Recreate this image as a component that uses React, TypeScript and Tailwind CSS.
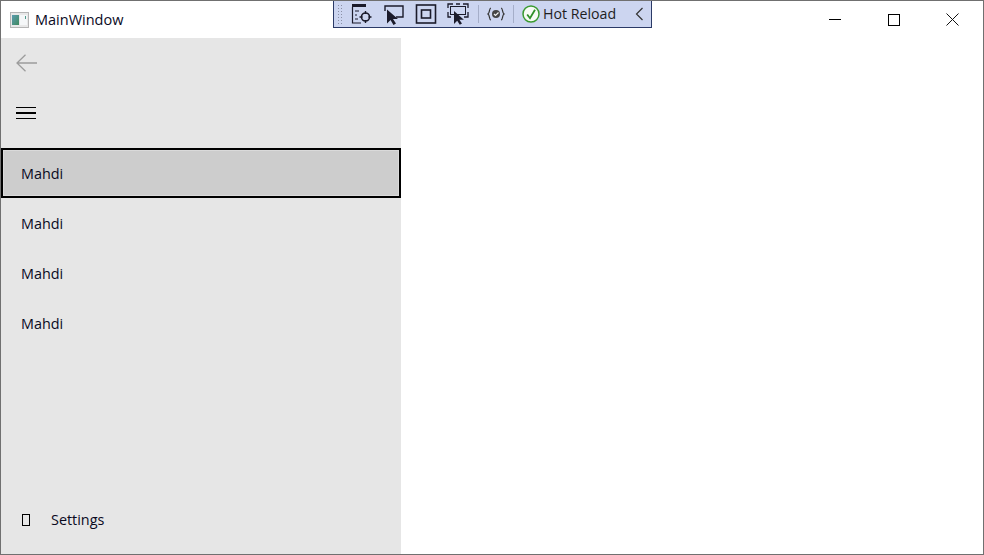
import React from "react";

const items = ["Mahdi", "Mahdi", "Mahdi", "Mahdi"];

function AppIcon() {
  return (
    <svg width="20" height="16" viewBox="0 0 20 16" className="shrink-0">
      <defs>
        <linearGradient id="appIconFill" x1="0" y1="0" x2="1" y2="1">
          <stop offset="0" stopColor="#5b9bb0" />
          <stop offset="1" stopColor="#3f8a5e" />
        </linearGradient>
      </defs>
      <rect x="0.5" y="0.5" width="18" height="15" fill="#e8e8e8" stroke="#b5b5b5" />
      <rect x="2" y="3" width="7" height="10" fill="url(#appIconFill)" />
      <rect x="10" y="3" width="7" height="10" fill="#f5f7f8" />
      <rect x="15" y="4" width="1" height="3" fill="#4f9a8c" />
    </svg>
  );
}

export default function App() {
  return (
    <div className="relative flex h-[555px] w-[984px] flex-col overflow-hidden border border-[#707070] bg-white font-['Open_Sans',sans-serif] text-[#0a0a1e]">
      <div className="flex h-[37px] shrink-0 items-center justify-between">
        <div className="flex items-center gap-[5px] pl-[9px]">
          <AppIcon />
          <span className="text-[14.5px]">MainWindow</span>
        </div>
        <div className="flex h-full items-center pr-px">
          <div className="flex h-full w-[59px] items-center justify-center">
            <div className="h-px w-3 bg-black" />
          </div>
          <div className="flex h-full w-[59px] items-center justify-center">
            <div className="size-3 border border-black" />
          </div>
          <div className="flex h-full w-[59px] items-center justify-center">
            <svg width="13" height="13" viewBox="0 0 13 13" stroke="#111" strokeWidth="1">
              <path d="M.5.5l12 12M12.500.5l-12 12" />
            </svg>
          </div>
        </div>
      </div>
      <div className="flex min-h-0 flex-1">
        <aside className="flex w-[400px] shrink-0 flex-col bg-[#e6e6e6] text-[14.4px]">
          <div className="flex h-[50px] shrink-0 items-center pl-[15px]">
            <svg width="21" height="18" viewBox="0 0 21 18" fill="none" stroke="#9c9c9c" strokeWidth="1.300">
              <path d="M.8 9H21M9.500.8L1 9l8.500 8.200" />
            </svg>
          </div>
          <div className="flex h-[50px] shrink-0 flex-col justify-center gap-[4px] pl-[15px]">
            <div className="h-[1.500px] w-5 bg-black" />
            <div className="h-[1.500px] w-5 bg-black" />
            <div className="h-[1.500px] w-5 bg-black" />
          </div>
          <div className="mt-[10px] flex flex-col">
            {items.map((name, i) => (
              <div
                key={i}
                className={
                  i === 0
                    ? "flex h-[50px] items-center border-2 border-black bg-[#cdcdcd] pl-[18px] pt-[2px] shadow-[inset_0_0_0_1px_#dadada]"
                    : "flex h-[50px] items-center pl-5 pt-[2px]"
                }
              >
                {name}
              </div>
            ))}
          </div>
          <div className="mb-[10px] mt-auto flex h-[50px] items-center pl-[21px] pt-[2px]">
            <div className="h-3 w-2 border border-black" />
            <span className="ml-[21px]">Settings</span>
          </div>
        </aside>
        <main className="flex-1 bg-white" />
      </div>
      <div className="absolute left-[332px] top-[-1px] flex h-[28px] w-[319px] items-center border border-[#2b3a67] bg-[#ccd5f0]">
        <div className="ml-[3px] h-[20px] w-[6px] bg-[radial-gradient(#8a8fa5_1px,transparent_1px)] bg-[length:3px_3px]" />
        <div className="ml-[8px] flex items-center gap-[10px]">
          <svg width="22" height="22" viewBox="0 0 22 22" fill="none" stroke="#1b1b2b" strokeWidth="1.2">
            <rect x="1" y="1" width="14" height="3" fill="#1b1b2b" stroke="none" />
            <path d="M1.500 4v16H10M4 8h4M4 12h2M4 16h3" />
            <circle cx="14.500" cy="14" r="4" strokeWidth="1.600" />
            <path d="M14.500 8v3M14.500 17v3M8.500 14h3M17.500 14h3" strokeWidth="1.400" />
          </svg>
          <svg width="22" height="22" viewBox="0 0 22 22" fill="none" stroke="#1b1b2b" strokeWidth="1.400">
            <path d="M2 8V3h18v11h-7" />
            <path d="M4 6.500V20.500l3.500-3.500 3 5 2.500-1.500-3-4.500h5z" fill="#1b1b2b" stroke="none" />
          </svg>
          <svg width="22" height="22" viewBox="0 0 22 22" fill="none" stroke="#1b1b2b">
            <rect x="1.500" y="2" width="19" height="18" strokeWidth="1.600" />
            <rect x="6.500" y="7" width="9" height="8" strokeWidth="1.600" />
          </svg>
          <svg width="22" height="22" viewBox="0 0 22 22" fill="none" stroke="#1b1b2b" strokeWidth="1.300">
            <path d="M1 5V1h5M16 1h5v4M1 9v5h3M21 9v5h-4M9 1h4" />
            <rect x="3.500" y="3.500" width="15" height="8" strokeWidth="1" />
            <path d="M7 8v13l3.200-3.200 2.600 4 2.200-1.400-2.600-3.600h4.500z" fill="#1b1b2b" stroke="none" />
          </svg>
        </div>
        <div className="ml-[9px] h-[18px] w-px bg-[#a5aec9]" />
        <svg width="18" height="14" viewBox="0 0 18 14" fill="none" className="ml-[8px]">
          <path d="M4 1C2 1 3 6 1 7c2 1 1 6 3 6M14 1c2 0 1 5 3 6-2 1-1 6-3 6" stroke="#333" strokeWidth="1.200" />
          <circle cx="9" cy="7" r="4" fill="#444" />
          <path d="M7 7l1.500 1.500L11.500 5.500" stroke="#eee" strokeWidth="1.200" />
        </svg>
        <div className="ml-[8px] h-[18px] w-px bg-[#a5aec9]" />
        <div className="ml-[8px] flex items-center gap-[3px]">
          <svg width="18" height="18" viewBox="0 0 18 18" fill="none" className="shrink-0">
            <circle cx="9" cy="9" r="8" fill="#f7fbf4" stroke="#3a9a30" strokeWidth="1.500" />
            <path d="M5.200 9.500l2.800 3.700 5-8.500" stroke="#2f8f28" strokeWidth="1.800" />
          </svg>
          <span className="-mt-px text-[14.2px] text-[#1e1e1e]">Hot Reload</span>
        </div>
        <svg width="9" height="14" viewBox="0 0 9 14" fill="none" stroke="#333" strokeWidth="1.200" className="ml-[19px]">
          <path d="M7.500 1L1.500 7l6 6" />
        </svg>
      </div>
    </div>
  );
}
